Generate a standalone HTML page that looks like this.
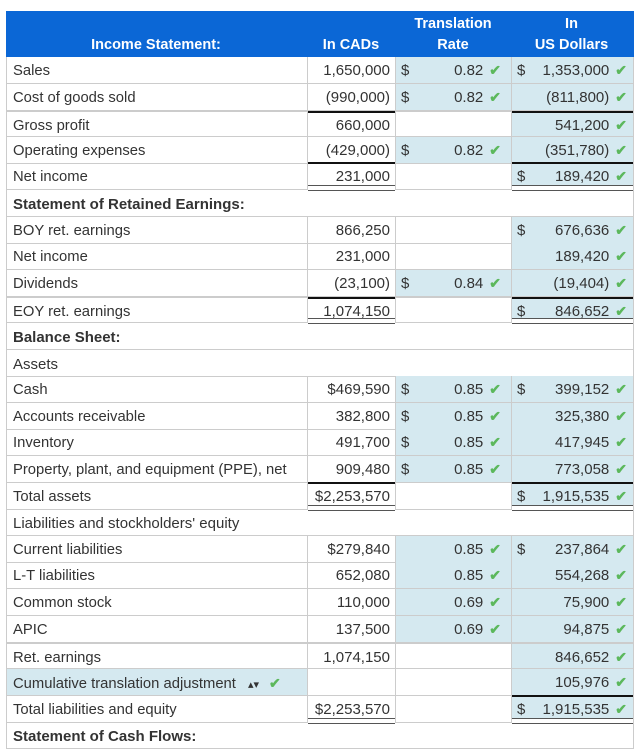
<!DOCTYPE html>
<html><head><meta charset="utf-8"><style>
*{box-sizing:border-box;margin:0;padding:0}
body{width:638px;height:749px;background:#fff;font-family:"Liberation Sans",sans-serif;font-size:15px;color:#333;position:relative;overflow:hidden}
.hdr{position:absolute;left:6px;top:11px;width:628px;height:46px;background:#0b67d6;color:#fff;font-weight:bold;font-size:14.5px}
.hdr div{position:absolute;text-align:center}
.r{position:absolute;left:6px;width:628px;height:27px;border-bottom:1px solid #ccc;border-left:1px solid #ccc;border-right:1px solid #ccc;display:flex}
.r>div{height:100%;line-height:27px;position:relative;white-space:nowrap}
.l{width:301px;padding-left:6px;padding-top:1px;border-right:1px solid #ccc;font-size:14.8px}
.c{width:88px;text-align:right;padding-right:5px;border-right:1px solid #ccc}
.t{width:116px;text-align:right;padding-right:10px;border-right:1px solid #ccc}
.u{width:121px;text-align:right;padding-right:6px}
.b{background:#d5e9f0}
.d{position:absolute;left:5px;top:0}
.k{color:#5cb85c;font-size:14px;font-weight:bold;margin-left:6px}
.s{font-weight:bold}
.full{width:626px;padding-left:6px;padding-top:1px}
.tl::before{content:"";position:absolute;left:0;right:0;top:-1px;height:2px;background:#111}
.dl::after{content:"";position:absolute;left:0;right:0;bottom:-2px;height:4px;border-top:1px solid #555;border-bottom:1px solid #555;background:#fff}
</style></head><body>
<div class="hdr">
<div style="left:30px;top:26px;width:240px">Income Statement:</div>
<div style="left:301px;top:26px;width:88px">In CADs</div>
<div style="left:389px;top:5px;width:116px">Translation</div>
<div style="left:389px;top:26px;width:116px">Rate</div>
<div style="left:505px;top:5px;width:121px">In</div>
<div style="left:505px;top:26px;width:121px">US Dollars</div>
</div>

<div class="r" style="top:57px"><div class="l">Sales</div><div class="c">1,650,000</div><div class="t b"><span class="d">$</span>0.82<span class="k">✔</span></div><div class="u b"><span class="d">$</span>1,353,000<span class="k">✔</span></div></div>
<div class="r" style="top:84px"><div class="l">Cost of goods sold</div><div class="c">(990,000)</div><div class="t b"><span class="d">$</span>0.82<span class="k">✔</span></div><div class="u b">(811,800)<span class="k">✔</span></div></div>
<div class="r" style="top:110px;border-top:2px solid #ccc"><div class="l">Gross profit</div><div class="c tl">660,000</div><div class="t"></div><div class="u b tl">541,200<span class="k">✔</span></div></div>
<div class="r" style="top:137px"><div class="l">Operating expenses</div><div class="c">(429,000)</div><div class="t b"><span class="d">$</span>0.82<span class="k">✔</span></div><div class="u b">(351,780)<span class="k">✔</span></div></div>
<div class="r" style="top:163px"><div class="l">Net income</div><div class="c tl dl">231,000</div><div class="t"></div><div class="u b tl dl"><span class="d">$</span>189,420<span class="k">✔</span></div></div>
<div class="r" style="top:190px"><div class="full s">Statement of Retained Earnings:</div></div>
<div class="r" style="top:217px"><div class="l">BOY ret. earnings</div><div class="c">866,250</div><div class="t"></div><div class="u b"><span class="d">$</span>676,636<span class="k">✔</span></div></div>
<div class="r" style="top:243px"><div class="l">Net income</div><div class="c">231,000</div><div class="t"></div><div class="u b">189,420<span class="k">✔</span></div></div>
<div class="r" style="top:270px"><div class="l">Dividends</div><div class="c">(23,100)</div><div class="t b"><span class="d">$</span>0.84<span class="k">✔</span></div><div class="u b">(19,404)<span class="k">✔</span></div></div>
<div class="r" style="top:296px;border-top:2px solid #ccc"><div class="l">EOY ret. earnings</div><div class="c tl dl">1,074,150</div><div class="t"></div><div class="u b tl dl"><span class="d">$</span>846,652<span class="k">✔</span></div></div>
<div class="r" style="top:323px"><div class="full s">Balance Sheet:</div></div>
<div class="r" style="top:350px"><div class="full">Assets</div></div>
<div class="r" style="top:376px"><div class="l">Cash</div><div class="c">$469,590</div><div class="t b"><span class="d">$</span>0.85<span class="k">✔</span></div><div class="u b"><span class="d">$</span>399,152<span class="k">✔</span></div></div>
<div class="r" style="top:403px"><div class="l">Accounts receivable</div><div class="c">382,800</div><div class="t b"><span class="d">$</span>0.85<span class="k">✔</span></div><div class="u b">325,380<span class="k">✔</span></div></div>
<div class="r" style="top:429px"><div class="l">Inventory</div><div class="c">491,700</div><div class="t b"><span class="d">$</span>0.85<span class="k">✔</span></div><div class="u b">417,945<span class="k">✔</span></div></div>
<div class="r" style="top:456px"><div class="l">Property, plant, and equipment (PPE), net</div><div class="c">909,480</div><div class="t b"><span class="d">$</span>0.85<span class="k">✔</span></div><div class="u b">773,058<span class="k">✔</span></div></div>
<div class="r" style="top:483px"><div class="l">Total assets</div><div class="c tl dl">$2,253,570</div><div class="t"></div><div class="u b tl dl"><span class="d">$</span>1,915,535<span class="k">✔</span></div></div>
<div class="r" style="top:509px"><div class="full">Liabilities and stockholders' equity</div></div>
<div class="r" style="top:536px"><div class="l">Current liabilities</div><div class="c">$279,840</div><div class="t b">0.85<span class="k">✔</span></div><div class="u b"><span class="d">$</span>237,864<span class="k">✔</span></div></div>
<div class="r" style="top:562px"><div class="l">L-T liabilities</div><div class="c">652,080</div><div class="t b">0.85<span class="k">✔</span></div><div class="u b">554,268<span class="k">✔</span></div></div>
<div class="r" style="top:589px"><div class="l">Common stock</div><div class="c">110,000</div><div class="t b">0.69<span class="k">✔</span></div><div class="u b">75,900<span class="k">✔</span></div></div>
<div class="r" style="top:616px"><div class="l">APIC</div><div class="c">137,500</div><div class="t b">0.69<span class="k">✔</span></div><div class="u b">94,875<span class="k">✔</span></div></div>
<div class="r" style="top:642px;border-top:2px solid #ccc"><div class="l">Ret. earnings</div><div class="c">1,074,150</div><div class="t"></div><div class="u b">846,652<span class="k">✔</span></div></div>
<div class="r" style="top:669px"><div class="l b">Cumulative translation adjustment <span style="font-size:11px;margin-left:8px">&#x25B4;&#x25BE;</span><span class="k" style="margin-left:10px">✔</span></div><div class="c"></div><div class="t"></div><div class="u b">105,976<span class="k">✔</span></div></div>
<div class="r" style="top:696px"><div class="l">Total liabilities and equity</div><div class="c dl">$2,253,570</div><div class="t"></div><div class="u b tl dl"><span class="d">$</span>1,915,535<span class="k">✔</span></div></div>
<div class="r" style="top:722px"><div class="full s">Statement of Cash Flows:</div></div>
</body></html>
